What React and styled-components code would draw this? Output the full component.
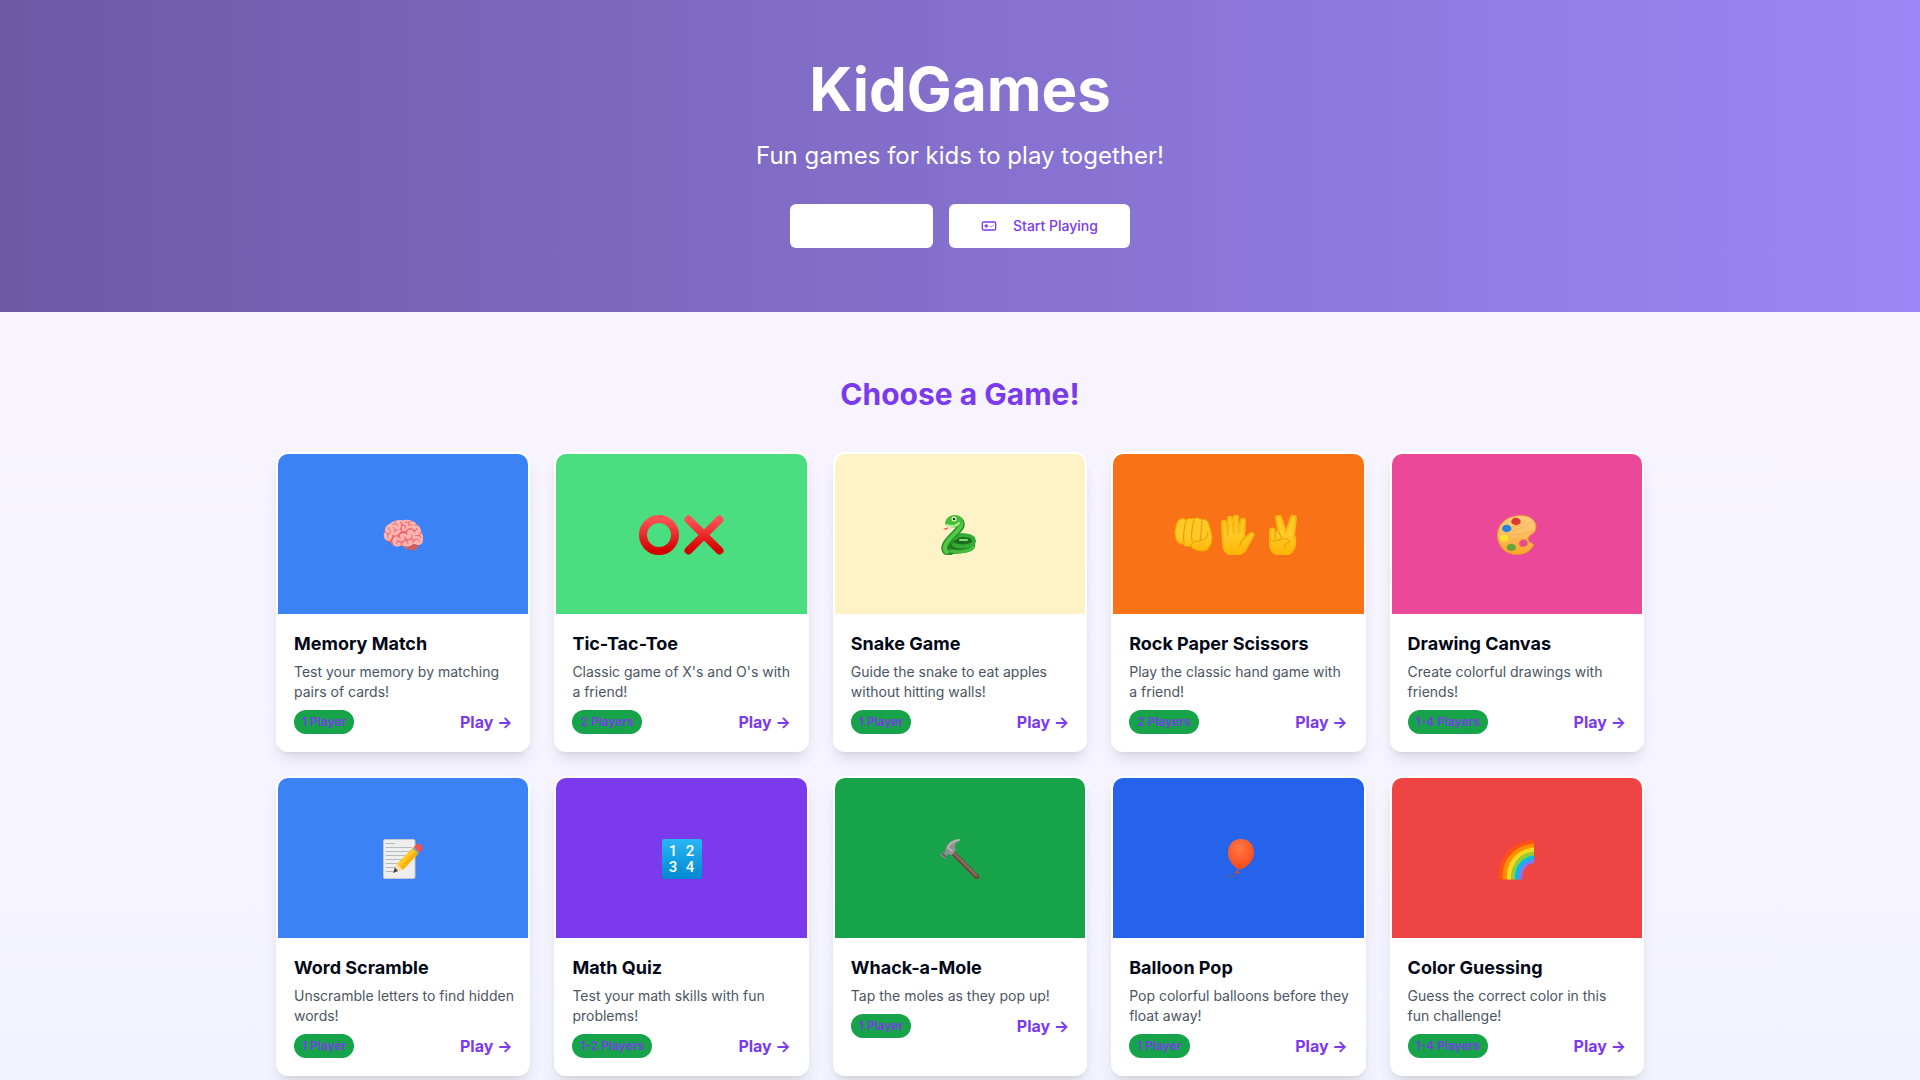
import React from "react";
import styled, { createGlobalStyle } from "styled-components";
import { Gamepad } from "lucide-react";

const CircleArt = () => (
	<StyledArt viewBox="0 0 40 40">
		<defs>
			<linearGradient id="circleRed" x1="0" y1="0" x2="0" y2="1">
				<stop offset="0" stopColor="#ff5252" />
				<stop offset="1" stopColor="#d50000" />
			</linearGradient>
		</defs>
		<circle
			cx="20"
			cy="20"
			r="16"
			fill="none"
			stroke="url(#circleRed)"
			strokeWidth="8"
		/>
	</StyledArt>
);

const CrossArt = () => (
	<StyledArt viewBox="0 0 40 40">
		<defs>
			<linearGradient id="crossRed" x1="0" y1="0" x2="0" y2="1">
				<stop offset="0" stopColor="#ff5252" />
				<stop offset="1" stopColor="#d50000" />
			</linearGradient>
		</defs>
		<path
			d="M4.500 4.500L35.500 35.500M35.500 4.500L4.500 35.500"
			stroke="url(#crossRed)"
			strokeWidth="8"
			strokeLinecap="round"
		/>
	</StyledArt>
);

const SnakeArt = () => (
	<StyledArt viewBox="0 0 40 40" fill="none" strokeLinecap="round">
		<path
			d="M8 29C14 24 31 24 33 29C35 35 24 37 8 37"
			fill="#1f7a22"
			stroke="#2a8f2c"
			strokeWidth="4"
		/>
		<path
			d="M15 23C20 18 34 20 34 26C34 31 23 33 14 30"
			fill="#1b6e1d"
			stroke="#35ab34"
			strokeWidth="4"
		/>
		<path
			d="M20 6C25 12 14 18 8 26C3 32 4 38 10 37"
			stroke="#2c8d2f"
			strokeWidth="7"
		/>
		<path
			d="M20 6C25 12 14 18 8 26C4 31 4 35 7 37"
			stroke="#4ccc3e"
			strokeWidth="4"
		/>
		<path d="M11 36C20 38 30 36 33 32" stroke="#43bd3d" strokeWidth="3" />
		<path d="M20 25H27" stroke="#7bdc70" strokeWidth="2" />
		<path
			d="M5 9C5 4 9 0 15 0C21 0 24 4 22 9C19 13 8 14 5 9Z"
			fill="#44bd39"
		/>
		<path d="M7 10C11 12 17 11 19 8" stroke="#b9eda0" strokeWidth="2" />
		<circle cx="14" cy="4" r="2.500" fill="#f5f5c8" />
		<circle cx="14" cy="4" r="1.300" fill="#263238" />
		<path d="M8 13L4 14M7 13L6 15" stroke="#ff5252" />
	</StyledArt>
);

const SkinGradient = ({ id }) => (
	<defs>
		<linearGradient
			id={id}
			gradientUnits="userSpaceOnUse"
			x1="0"
			y1="0"
			x2="0"
			y2="40"
		>
			<stop offset="0.5" stopColor="#ffca28" />
			<stop offset="1" stopColor="#ffb300" />
		</linearGradient>
	</defs>
);

const FistArt = () => (
	<StyledArt viewBox="0 0 40 40" fill="none" strokeLinecap="round">
		<SkinGradient id="fistSkin" />
		<path
			d="M2 17C3 10 4 5 8 4C10 3 12 4 13 5C15 3 19 3 21 4C23 2 27 3 29 5C32 4 35 5 36 9L39 22C39 29 37 31 35 34C32 37 26 36 23 35C20 34 19 33 18 31C15 32 12 32 10 29C5 29 2 26 2 17Z"
			fill="url(#fistSkin)"
			stroke="#eda600"
		/>
		<path
			d="M13 6C11 13 10 20 11 28M21 5C19 13 18 19 19 26M29 6C29 13 28 19 27 25M18 30C21 24 27 28 29 25C34 24 35 20 35 17"
			stroke="#e59600"
		/>
	</StyledArt>
);

const PalmArt = () => (
	<StyledArt viewBox="0 0 40 40" fill="none" strokeLinecap="round">
		<SkinGradient id="palmSkin" />
		<path
			d="M4 8C4 5 8 5 8 8L10 20L10 4C10 1 14 1 14 4L16 18L16 2C16 0 20 0 20 2L21 18L23 6C23 3 27 3 27 6L26 24L32 19C34 17 37 19 35 21L29 32C26 38 22 40 17 40C9 40 5 36 5 28Z"
			fill="url(#palmSkin)"
			stroke="#f9b710"
			strokeWidth="2"
			strokeLinejoin="round"
		/>
		<path d="M26 23C23 26 22 28 22 31" stroke="#e59600" />
	</StyledArt>
);

const VictoryArt = () => (
	<StyledArt viewBox="0 0 40 40" fill="none" strokeLinecap="round">
		<SkinGradient id="victorySkin" />
		<path
			d="M13 3C13 0 17 0 18 2L23 17L28 2C29 0 33 0 33 3L31 20C34 28 32 40 20 40C10 40 7 35 7 28L7 17C7 13 11 12 12 16L16 18Z"
			fill="url(#victorySkin)"
			stroke="#f9b710"
			strokeWidth="2"
			strokeLinejoin="round"
		/>
		<path
			d="M12 16L12 24M16 18L19 23M8 25C11 27 15 26 17 24M16 25C23 22 26 25 27 27C22 28 21 30 21 33"
			stroke="#e59600"
		/>
	</StyledArt>
);

const PaletteArt = () => (
	<StyledArt viewBox="0 0 40 40" fill="none">
		<defs>
			<linearGradient id="wood" x1="0" y1="0" x2="0" y2="1">
				<stop offset="0" stopColor="#ffcc80" />
				<stop offset="0.5" stopColor="#ffbd61" />
				<stop offset="1" stopColor="#ffa526" />
			</linearGradient>
		</defs>
		<path
			fillRule="evenodd"
			d="M24 0.500C34 0.500 39 6 39 12C39 20 31 19 31 24C31 28 36 27 36.500 30C34 36 28 39.500 20 39.500C8 39.500 0.500 31 0.500 20C0.500 8 11 0.500 24 0.500ZM26.500 24.500C24 24.500 22 26.500 22 28.500C22 31 24 32 26 32C29 32 31 30 31 28C31 26 29 24.500 26.500 24.500Z"
			fill="url(#wood)"
			stroke="#e69430"
		/>
		<path
			d="M13 16C22 15 31 10 35 5M15 12C22 11 28 7 30 4M10 28C12 20 16 18 20 20C24 20 32 18 36 15M17 25C17 30 11 30 16 24C20 20 19 25 19 28"
			stroke="#f7b05a"
		/>
		<ellipse cx="19" cy="6.500" rx="4.700" ry="3.700" fill="#dc3834" />
		<ellipse cx="9.700" cy="13.500" rx="4.700" ry="3.700" fill="#2483dc" />
		<ellipse cx="7.200" cy="23.200" rx="4.500" ry="3.500" fill="#ffe02e" />
		<ellipse cx="14.300" cy="32.400" rx="4.600" ry="3.700" fill="#69a53b" />
	</StyledArt>
);

const NoteArt = () => (
	<StyledArt viewBox="0 0 40 40" fill="none">
		<rect
			x="0.500"
			y="0.500"
			width="31.500"
			height="39"
			rx="1.500"
			fill="#eeeeee"
			stroke="#c4c8cb"
		/>
		<path
			d="M2.500 4.500H12M2.500 8.500H29M2.500 12.500H29M2.500 16.500H29M2.500 20.500H29M2.500 24.500H22M2.500 28.500H14M2.500 32.500H10"
			stroke="#b8bcbf"
		/>
		<path d="M31 8L36 14L20 31L14 25Z" fill="#ffb300" />
		<path d="M31 8L33.500 11L17 28L14 25Z" fill="#ffc928" />
		<path d="M14 25L20 31L10.500 33.500Z" fill="#ffe0a3" />
		<path d="M12 28.500L15 32L10 34Z" fill="#424242" />
		<path d="M29.500 9.500L31 8L36.500 13.500L35 15Z" fill="#90a4ae" />
		<path
			d="M31 8L34 5C36 3 41 8 39.500 10.500L36.500 13.500Z"
			fill="#ef5350"
		/>
	</StyledArt>
);

const NumbersArt = () => (
	<StyledArt viewBox="0 0 40 40">
		<defs>
			<linearGradient id="tileBlue" x1="0" y1="0" x2="0" y2="1">
				<stop offset="0" stopColor="#29b6f6" />
				<stop offset="1" stopColor="#0288d1" />
			</linearGradient>
		</defs>
		<rect width="40" height="40" rx="2" fill="url(#tileBlue)" />
		<StyledDigit x="11" y="17">
			1
		</StyledDigit>
		<StyledDigit x="28" y="17">
			2
		</StyledDigit>
		<StyledDigit x="11" y="33">
			3
		</StyledDigit>
		<StyledDigit x="28" y="33">
			4
		</StyledDigit>
	</StyledArt>
);

const HammerArt = () => (
	<StyledArt viewBox="0 0 40 40" fill="none" strokeLinecap="round">
		<path d="M13 14L37 38" stroke="#6d4c41" strokeWidth="5" />
		<path d="M13 13L36 36" stroke="#8d6e63" strokeWidth="2" />
		<path
			d="M20 0C13 0 9 3 6 8L5 13L2 13L0 15L5 20L7 18L7 15L12 16L16 11L15 8C15 4 19 2 20 0Z"
			fill="#8e9190"
		/>
		<path d="M19 1C13 2 9 5 8 9L12 12" stroke="#b0b3b2" strokeWidth="2" />
		<path d="M2 14L6 18" stroke="#616564" strokeWidth="2" />
	</StyledArt>
);

const BalloonArt = () => (
	<StyledArt viewBox="0 0 40 40" fill="none" strokeLinecap="round">
		<defs>
			<radialGradient id="balloon" cx="0.45" cy="0.3" r="0.6">
				<stop offset="0" stopColor="#ff7a45" />
				<stop offset="0.5" stopColor="#ff6332" />
				<stop offset="1" stopColor="#f4511e" />
			</radialGradient>
		</defs>
		<path d="M18 34C20 41 13 34 8.500 39" stroke="#665c62" />
		<path
			d="M23 0C31 0 36 6 36 14C36 22 28 30 21 30C16 29 10 21 10 14C10 6 15 0 23 0Z"
			fill="url(#balloon)"
		/>
		<path d="M19 29L21 30L20 32L22 34L16 34L19 32Z" fill="#e64a19" />
	</StyledArt>
);

const games = [
	{
		title: "Memory Match",
		text: "Test your memory by matching pairs of cards!",
		art: "🧠",
		players: "1 Player",
		color: "#3b82f6",
	},
	{
		title: "Tic-Tac-Toe",
		text: "Classic game of X's and O's with a friend!",
		art: (
			<>
				<CircleArt />
				<CrossArt />
			</>
		),
		players: "2 Players",
		color: "#4ade80",
	},
	{
		title: "Snake Game",
		text: "Guide the snake to eat apples without hitting walls!",
		art: <SnakeArt />,
		players: "1 Player",
		color: "#fef3c7",
	},
	{
		title: "Rock Paper Scissors",
		text: "Play the classic hand game with a friend!",
		art: (
			<>
				<FistArt />
				<PalmArt />
				<VictoryArt />
			</>
		),
		players: "2 Players",
		color: "#f97316",
	},
	{
		title: "Drawing Canvas",
		text: "Create colorful drawings with friends!",
		art: <PaletteArt />,
		players: "1-4 Players",
		color: "#ec4899",
	},
	{
		title: "Word Scramble",
		text: "Unscramble letters to find hidden words!",
		art: <NoteArt />,
		players: "1 Player",
		color: "#3b82f6",
	},
	{
		title: "Math Quiz",
		text: "Test your math skills with fun problems!",
		art: <NumbersArt />,
		players: "1-2 Players",
		color: "#7c3aed",
	},
	{
		title: "Whack-a-Mole",
		text: "Tap the moles as they pop up!",
		art: <HammerArt />,
		players: "1 Player",
		color: "#16a34a",
	},
	{
		title: "Balloon Pop",
		text: "Pop colorful balloons before they float away!",
		art: <BalloonArt />,
		players: "1 Player",
		color: "#2563eb",
	},
	{
		title: "Color Guessing",
		text: "Guess the correct color in this fun challenge!",
		art: "🌈",
		players: "1-4 Players",
		color: "#ef4444",
	},
];

const GameCard = ({ title, text, art, players, color }) => (
	<StyledCard>
		<StyledCardCover color={color}>{art}</StyledCardCover>
		<StyledCardBody>
			<StyledCardTitle>{title}</StyledCardTitle>
			<StyledCardText>{text}</StyledCardText>
			<StyledCardBottom>
				<StyledBadge>{players}</StyledBadge>
				<StyledPlayLink href="#play">Play →</StyledPlayLink>
			</StyledCardBottom>
		</StyledCardBody>
	</StyledCard>
);

const App = () => {
	return (
		<>
			<GlobalStyle />
			<StyledHeader>
				<StyledLogo>KidGames</StyledLogo>
				<StyledSubtitle>Fun games for kids to play together!</StyledSubtitle>
				<StyledActions>
					<StyledBlankButton type="button" aria-label="Learn more" />
					<StyledButton type="button">
						<Gamepad size={16} />
						Start Playing
					</StyledButton>
				</StyledActions>
			</StyledHeader>
			<StyledMain>
				<StyledTitle>Choose a Game!</StyledTitle>
				<StyledGames>
					{games.map((game) => (
						<GameCard key={game.title} {...game} />
					))}
				</StyledGames>
			</StyledMain>
		</>
	);
};

const GlobalStyle = createGlobalStyle`
	* {
		box-sizing: border-box;
		margin: 0;
	}
	body {
		font-family: Inter, "Liberation Sans", sans-serif;
		font-size: 16px;
		line-height: 24px;
		color: #020817;
		background: linear-gradient(180deg, #f9f5ff 0%, #f3f3ff 100%);
		min-height: 100vh;
	}
`;

const StyledHeader = styled.header`
	display: flex;
	flex-direction: column;
	align-items: center;
	padding: 59px 16px 64px;
	color: #fff;
	background: linear-gradient(90deg, #6e59a5, #9b87f5);
`;

const StyledLogo = styled.h1`
	font-size: 60px;
	line-height: 60px;
	font-weight: 700;
	margin: 0 0 21px 0;
`;

const StyledSubtitle = styled.p`
	font-size: 24px;
	line-height: 32px;
	font-weight: 400;
	margin: 0 0 32px 0;
`;

const StyledActions = styled.div`
	display: flex;
	flex-wrap: wrap;
	justify-content: center;
	gap: 16px;
`;

const StyledButton = styled.button`
	display: flex;
	align-items: center;
	gap: 16px;
	height: 44px;
	padding: 0 32px;
	border: 0;
	border-radius: 6px;
	background: #fff;
	color: #7c3aed;
	font-family: inherit;
	font-size: 14px;
	line-height: 20px;
	font-weight: 500;
	cursor: pointer;
`;

const StyledBlankButton = styled(StyledButton)`
	width: 143px;
`;

const StyledMain = styled.main`
	max-width: 1400px;
	margin: 0 auto;
	padding: 64px 16px;
`;

const StyledTitle = styled.h2`
	font-size: 30px;
	line-height: 36px;
	font-weight: 700;
	text-align: center;
	color: #7c3aed;
	margin: 0 0 40px 0;
`;

const StyledGames = styled.div`
	display: grid;
	grid-template-columns: repeat(5, 1fr);
	gap: 24px;
	@media (max-width: 1279px) {
		grid-template-columns: repeat(3, 1fr);
	}
	@media (max-width: 767px) {
		grid-template-columns: 1fr;
	}
`;

const StyledCard = styled.article`
	overflow: hidden;
	border: 2px solid #fff;
	border-radius: 12px;
	background: #fff;
	box-shadow: 0 10px 15px -3px rgba(0, 0, 0, 0.1),
		0 4px 6px -4px rgba(0, 0, 0, 0.1);
`;

const StyledCardCover = styled.div`
	display: flex;
	align-items: center;
	justify-content: center;
	gap: 5px;
	height: 160px;
	padding: 2px 0 0 0;
	font-size: 36px;
	line-height: 40px;
	background: ${({ color }) => color};
`;

const StyledArt = styled.svg`
	display: block;
	width: 40px;
	height: 40px;
`;

const StyledDigit = styled.text`
	font-family: Roboto, sans-serif;
	font-size: 15px;
	font-weight: 500;
	text-anchor: middle;
	fill: #fff;
`;

const StyledCardBody = styled.div`
	padding: 16px;
`;

const StyledCardTitle = styled.h3`
	font-size: 18px;
	line-height: 28px;
	font-weight: 700;
	margin: 0 0 4px 0;
`;

const StyledCardText = styled.p`
	font-size: 14px;
	line-height: 20px;
	color: #4b5563;
	margin: 0 -4px 8px 0;
`;

const StyledCardBottom = styled.div`
	display: flex;
	align-items: center;
	justify-content: space-between;
`;

const StyledBadge = styled.span`
	padding: 4px 8px;
	border-radius: 12px;
	background: #16a34a;
	color: #7c3aed;
	font-size: 12px;
	line-height: 16px;
	font-weight: 600;
`;

const StyledPlayLink = styled.a`
	color: #7c3aed;
	font-weight: 700;
	text-decoration: none;
`;

export default App;
